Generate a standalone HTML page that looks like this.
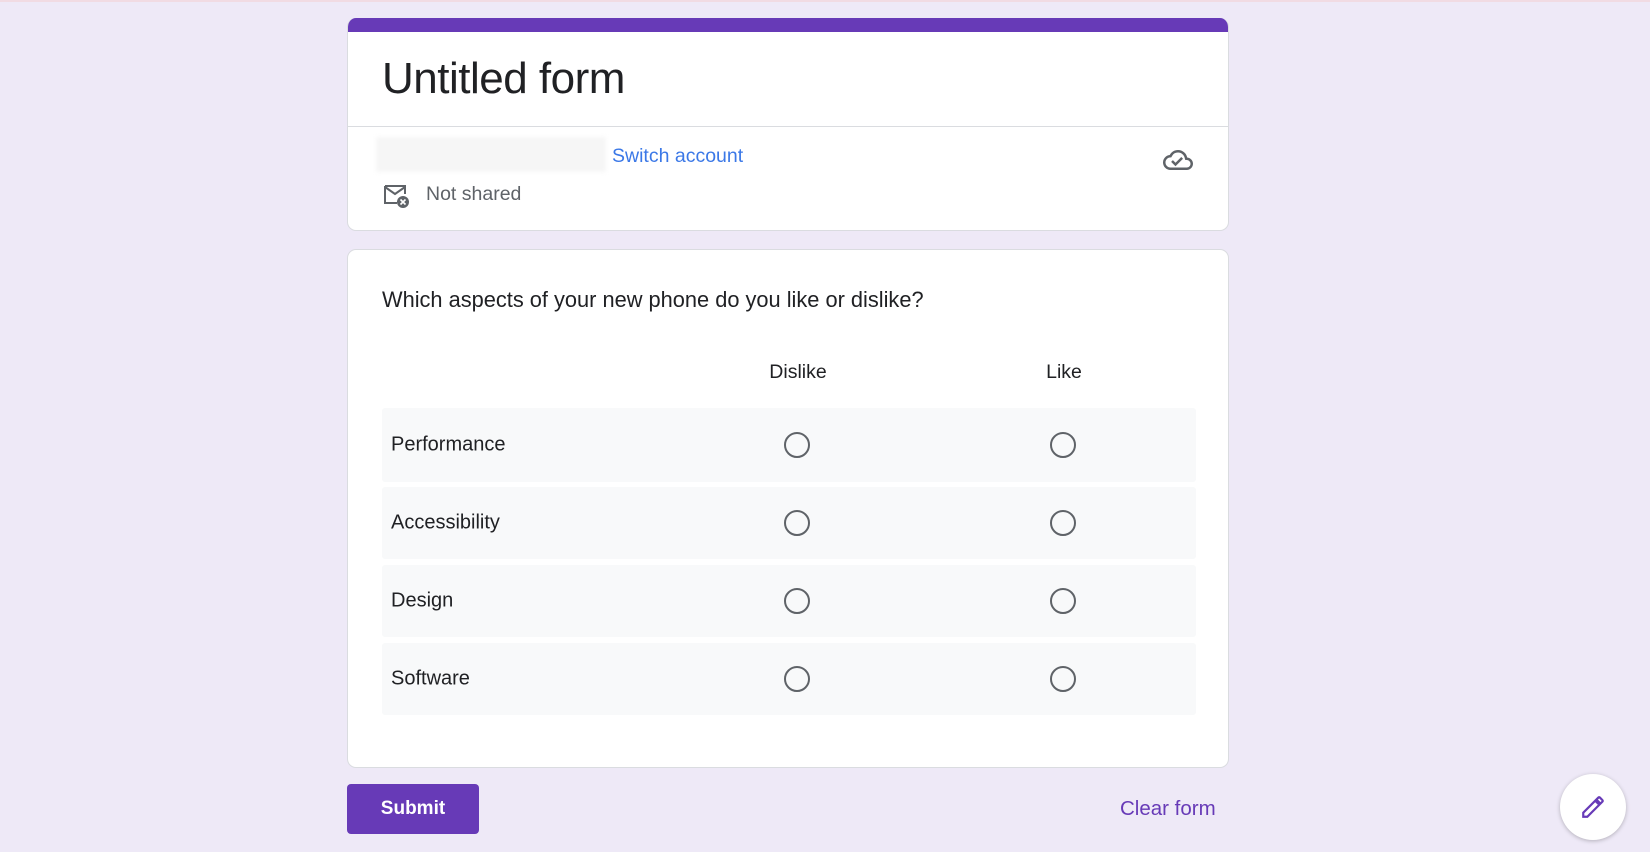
<!DOCTYPE html>
<html><head><style>
body{margin:0;width:1650px;height:852px;background:#eee9f7;font-family:"Liberation Sans",Arial,sans-serif;position:relative;overflow:hidden;color:#202124}
.topline{position:absolute;left:0;top:0;width:1650px;height:2px;background:#f1dbe3}
.card{position:absolute;left:347px;width:882px;background:#fff;border:1px solid #dadce0;border-radius:9px;box-sizing:border-box}
.abs{position:absolute}
.row{position:absolute;left:34px;width:814px;background:#f8f9fa;border-radius:3px}
.row span{position:absolute;left:9px;top:50%;transform:translateY(-50%);font-size:20px}
.radio{position:absolute;width:22px;height:22px;border:2px solid #5f6368;border-radius:50%;top:50%;margin-top:-13px}
</style></head><body>
<div class="topline"></div>
<div class="card" style="top:18px;height:213px;overflow:hidden;border-top:none">
  <div class="abs" style="left:0;top:0;width:882px;height:14px;background:#673ab7"></div>
  <div class="abs" style="left:34px;top:36px;font-size:44px;line-height:50px;color:#202124;letter-spacing:-0.5px">Untitled form</div>
  <div class="abs" style="left:0;top:108px;width:882px;height:1px;background:#dadce0"></div>
  <div class="abs" style="left:28px;top:119px;width:230px;height:35px;background:#f6f6f6;filter:blur(2px)"></div>
  <div class="abs" style="left:264px;top:127px;font-size:19.5px;color:#3b78e7">Switch account</div>
  <svg class="abs" style="left:814px;top:127px" width="32" height="30" viewBox="0 0 24 24"><path d="M19.35 10.04A7.49 7.49 0 0 0 12 4C9.11 4 6.6 5.64 5.35 8.04A5.99 5.99 0 0 0 0 14c0 3.31 2.69 6 6 6h13c2.76 0 5-2.240 5-5 0-2.64-2.05-4.78-4.65-4.96zM19 18H6c-2.21 0-4-1.79-4-4 0-2.05 1.53-3.76 3.56-3.970l1.07-.11.5-.95A5.47 5.47 0 0 1 12 6c2.62 0 4.88 1.86 5.39 4.43l.3 1.5 1.53.11A2.98 2.98 0 0 1 22 15c0 1.65-1.35 3-3 3zm-9-3.820-2.09-2.09L6.5 13.5 10 17l6.01-6.01-1.41-1.410z" fill="#5f6368"/></svg>
  <svg class="abs" style="left:35px;top:165px" width="28" height="26" viewBox="0 0 28 26"><path d="M2 3h20v8" fill="none" stroke="#5f6368" stroke-width="2"/><path d="M2 3v17h12" fill="none" stroke="#5f6368" stroke-width="2"/><path d="M2 4l10 7 10-7" fill="none" stroke="#5f6368" stroke-width="2"/><circle cx="20" cy="19" r="6" fill="#5f6368"/><path d="M17.5 16.5l5 5M22.5 16.5l-5 5" stroke="#fff" stroke-width="1.6"/></svg>
  <div class="abs" style="left:78px;top:165px;font-size:19.5px;color:#5f6368">Not shared</div>
</div>
<div class="card" style="top:249px;height:519px">
  <div class="abs" style="left:34px;top:37px;font-size:21.8px">Which aspects of your new phone do you like or dislike?</div>
  <div class="abs" style="left:400px;top:111px;width:100px;text-align:center;font-size:19.5px">Dislike</div>
  <div class="abs" style="left:666px;top:111px;width:100px;text-align:center;font-size:19.5px">Like</div>
  <div class="row" style="top:158px;height:74px"><span>Performance</span><div class="radio" style="left:402px"></div><div class="radio" style="left:668px"></div></div>
  <div class="row" style="top:237px;height:72px"><span>Accessibility</span><div class="radio" style="left:402px"></div><div class="radio" style="left:668px"></div></div>
  <div class="row" style="top:315px;height:72px"><span>Design</span><div class="radio" style="left:402px"></div><div class="radio" style="left:668px"></div></div>
  <div class="row" style="top:393px;height:72px"><span>Software</span><div class="radio" style="left:402px"></div><div class="radio" style="left:668px"></div></div>
</div>
<div class="abs" style="left:347px;top:784px;width:132px;height:50px;background:#673ab7;border-radius:4px;color:#fff;font-size:19px;font-weight:bold;text-align:center;line-height:50px">Submit</div>
<div class="abs" style="left:1120px;top:797px;font-size:20.5px;color:#673ab7">Clear form</div>
<div class="abs" style="left:1560px;top:774px;width:66px;height:66px;border-radius:50%;background:#fff;box-shadow:0 1px 4px rgba(0,0,0,.25)">
<svg class="abs" style="left:20px;top:20px" width="26" height="26" viewBox="0 0 24 24"><path d="M3 17.25V21h3.75L17.81 9.94l-3.75-3.75L3 17.25zM20.71 7.04a1 1 0 0 0 0-1.41l-2.34-2.34a1 1 0 0 0-1.41 0l-1.83 1.83 3.75 3.75 1.83-1.83z" fill="none" stroke="#673ab7" stroke-width="2"/></svg></div>
</body></html>
